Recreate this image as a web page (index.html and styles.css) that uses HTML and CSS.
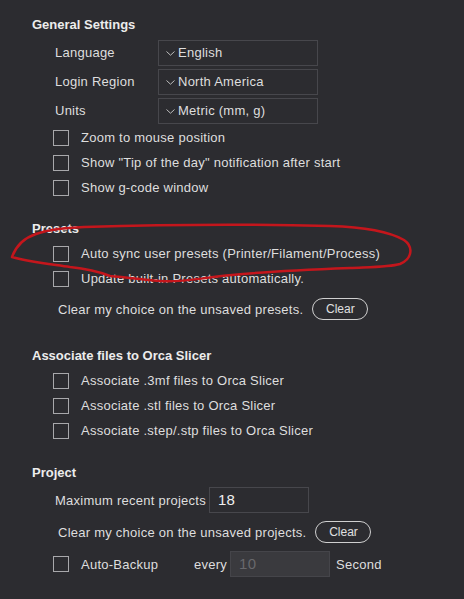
FILE: index.html
```html
<!DOCTYPE html>
<html lang="en">

<head>
  <meta charset="UTF-8">
  <meta name="viewport" content="width=device-width, initial-scale=1.0">
  <title>Preferences</title>
  <link rel="stylesheet" href="styles.css">
</head>

<body>
  <div class="prefs">
    <div class="section general">
      <div class="title">General Settings</div>
      <div class="combo-row">
        <span class="label">Language</span>
        <div class="combo"><svg class="chev" width="9" height="5" viewBox="0 0 9 5"><polyline points="0.5,0.5 4.5,4.2 8.5,0.5" /></svg>English</div>
      </div>
      <div class="combo-row">
        <span class="label">Login Region</span>
        <div class="combo"><svg class="chev" width="9" height="5" viewBox="0 0 9 5"><polyline points="0.5,0.5 4.5,4.2 8.5,0.5" /></svg>North America</div>
      </div>
      <div class="combo-row">
        <span class="label">Units</span>
        <div class="combo"><svg class="chev" width="9" height="5" viewBox="0 0 9 5"><polyline points="0.5,0.5 4.5,4.2 8.5,0.5" /></svg>Metric (mm, g)</div>
      </div>
      <label class="check-row"><span class="box"></span>Zoom to mouse position</label>
      <label class="check-row"><span class="box"></span>Show "Tip of the day" notification after start</label>
      <label class="check-row"><span class="box"></span>Show g-code window</label>
    </div>

    <div class="section presets">
      <div class="title">Presets</div>
      <label class="check-row"><span class="box"></span>Auto sync user presets (Printer/Filament/Process)</label>
      <label class="check-row"><span class="box"></span>Update built-in Presets automatically.</label>
      <div class="clear-row">
        <span>Clear my choice on the unsaved presets.</span>
        <button class="btn-clear">Clear</button>
      </div>
    </div>

    <div class="section assoc">
      <div class="title">Associate files to Orca Slicer</div>
      <label class="check-row"><span class="box"></span>Associate .3mf files to Orca Slicer</label>
      <label class="check-row"><span class="box"></span>Associate .stl files to Orca Slicer</label>
      <label class="check-row"><span class="box"></span>Associate .step/.stp files to Orca Slicer</label>
    </div>

    <div class="section project">
      <div class="title">Project</div>
      <div class="recent-row">
        <span class="label">Maximum recent projects</span>
        <div class="field">18</div>
      </div>
      <div class="clear-row">
        <span>Clear my choice on the unsaved projects.</span>
        <button class="btn-clear">Clear</button>
      </div>
      <div class="backup-row">
        <label class="check-row"><span class="box"></span>Auto-Backup</label>
        <span class="every">every</span>
        <div class="field disabled">10</div>
        <span>Second</span>
      </div>
    </div>

    <!-- red hand-drawn mark over the auto sync option -->
    <svg class="mark" width="464" height="599" viewBox="0 0 464 599">
      <path d="M12,257 C16,246 24,238 36,234 C50,229 66,228 84,227 C150,225 250,224 330,226 C362,227 390,232 404,240 C414,247 412,259 400,264 C390,267 372,267 350,268 C300,270 262,272 232,275 C200,278 180,283 160,281 C140,279 122,277 110,276 C100,272 90,269 70,267 C50,264 30,262 12,257 Z" />
    </svg>
  </div>
</body>

</html>
```

FILE: styles.css
```css
body {
  margin: 0;
  background-color: #2c2c30;
  color: #dedede;
  font-family: "Liberation Sans", Arial, sans-serif;
  font-size: 13px;
  letter-spacing: 0.25px;
}

.prefs {
  position: relative;
  padding: 15px 0 0 32px;
}

.section .title {
  height: 20px;
  line-height: 20px;
  font-weight: bold;
  color: #ececec;
  letter-spacing: 0;
}

.presets {
  margin-top: 19px;
}

.assoc {
  margin-top: 22px;
}

.project {
  margin-top: 20px;
}

.general .title {
  margin-bottom: 3px;
}

.presets .title,
.assoc .title {
  margin-bottom: 2px;
}

.combo-row {
  display: flex;
  align-items: center;
  height: 29px;
  padding-left: 23px;
}

.combo-row .label {
  width: 103px;
}

.combo {
  display: flex;
  align-items: center;
  box-sizing: border-box;
  width: 160px;
  height: 26px;
  border: 1px solid #47474c;
  padding-left: 7px;
}

.chev {
  margin: 1px 3px 0 0;
}

.chev polyline {
  fill: none;
  stroke: #bdbdbd;
  stroke-width: 1;
}

.check-row {
  display: flex;
  align-items: center;
  height: 25px;
  padding-left: 21px;
}

.box {
  box-sizing: border-box;
  width: 16px;
  height: 16px;
  border: 1px solid #a8a8ab;
  margin-right: 12px;
}

.clear-row {
  display: flex;
  align-items: center;
  height: 30px;
  padding-left: 26px;
  margin-top: 3px;
}

.btn-clear {
  margin-left: 9px;
  width: 56px;
  height: 22px;
  border: 1px solid #d0d0d0;
  border-radius: 11px;
  background-color: transparent;
  color: #e0e0e0;
  font-family: inherit;
  font-size: 12px;
  padding: 0;
}

.recent-row {
  display: flex;
  align-items: center;
  height: 28px;
  margin-top: 3px;
  padding-left: 23px;
}

.field {
  box-sizing: border-box;
  width: 100px;
  height: 26px;
  line-height: 24px;
  border: 1px solid #47474c;
  padding-left: 8px;
  margin-left: 3px;
  font-size: 15px;
  color: #f0f0f0;
}

.field.disabled {
  background-color: #3a3a3e;
  border-color: #45454a;
  color: #68686c;
  margin: 0 6px 0 3px;
}

.backup-row {
  display: flex;
  align-items: center;
  height: 26px;
  margin-top: 4px;
}

.backup-row .check-row {
  width: 141px;
}

.mark {
  position: absolute;
  top: 0;
  left: 0;
  pointer-events: none;
}

.mark path {
  fill: none;
  stroke: #c4161c;
  stroke-width: 2.5;
  stroke-linejoin: round;
}
```
